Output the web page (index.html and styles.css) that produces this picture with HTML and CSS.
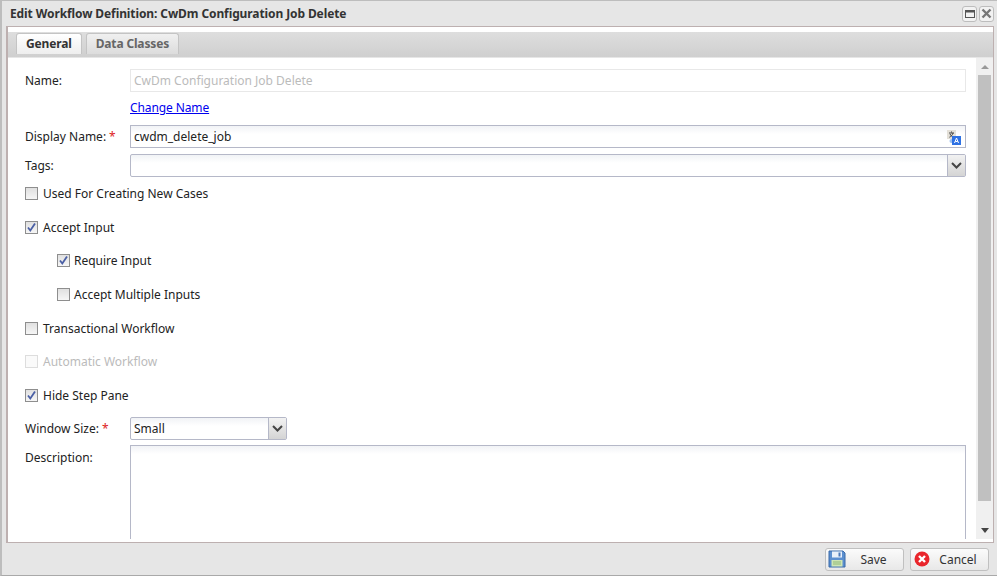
FILE: index.html
```html
<!DOCTYPE html>
<html lang="en">
<head>
<meta charset="utf-8">
<title>Edit Workflow Definition</title>
<link rel="stylesheet" href="styles.css">
</head>
<body>
<div class="window">
  <header class="titlebar">
    <h1 class="title">Edit Workflow Definition: CwDm Configuration Job Delete</h1>
    <div class="winbtns">
      <button class="winbtn" aria-label="Maximize"><svg width="10" height="8" viewBox="0 0 10 8"><rect x="0.500" y="0.500" width="9" height="7" fill="none" stroke="#555"/><rect x="0" y="0" width="10" height="2.500" fill="#555"/></svg></button>
      <button class="winbtn" aria-label="Close"><svg width="11" height="11" viewBox="0 0 11 11"><path d="M1.500 1.500L9.500 9.500M9.500 1.500L1.500 9.500" stroke="#777" stroke-width="2.400" fill="none"/></svg></button>
    </div>
  </header>
  <main class="panel">
    <div class="tabstrip">
      <div class="tab tab-active">General</div>
      <div class="tab">Data Classes</div>
    </div>
    <div class="tabbody">
      <form class="form">
        <div class="row row-name">
          <label class="lbl">Name:</label>
          <div class="field field-disabled">CwDm Configuration Job Delete</div>
        </div>
        <div class="row row-link">
          <span class="lbl"></span>
          <a class="link" href="#">Change Name</a>
        </div>
        <div class="row row-display">
          <label class="lbl">Display Name:<span class="req">*</span></label>
          <div class="field field-text">cwdm_delete_job
            <svg class="translate" width="14" height="15" viewBox="0 0 14 15"><rect x="0" y="0" width="9" height="9" fill="#e4e0d8"/><path d="M4.500 1.500v1M2 3h5M6 3c-.4 2-2 3.600-3.600 4.200M3 4c.7 1.500 1.800 2.600 3.200 3.200" stroke="#444" fill="none"/><circle cx="4.500" cy="11" r="2" fill="#9cc0ef"/><rect x="5" y="6" width="9" height="9" fill="#2f72e4"/><path d="M7.500 13l2-5 2 5M8.300 11.500h2.400" stroke="#fff" fill="none"/></svg>
          </div>
        </div>
        <div class="row row-tags">
          <label class="lbl">Tags:</label>
          <div class="field field-combo">
            <span class="combo-val"></span>
            <span class="combo-btn"><svg width="11" height="7" viewBox="0 0 11 7"><path d="M1 1l4.500 4.500L10 1" stroke="#444" stroke-width="2" fill="none"/></svg></span>
          </div>
        </div>
        <label class="check check-first"><span class="box"></span>Used For Creating New Cases</label>
        <label class="check"><span class="box"><svg width="11" height="11" viewBox="0 0 11 11"><path d="M2 5.500l2.300 3L9 1.500" stroke="#4a5fa5" stroke-width="1.800" fill="none"/></svg></span>Accept Input</label>
        <label class="check check-sub"><span class="box"><svg width="11" height="11" viewBox="0 0 11 11"><path d="M2 5.500l2.300 3L9 1.500" stroke="#4a5fa5" stroke-width="1.800" fill="none"/></svg></span>Require Input</label>
        <label class="check check-sub"><span class="box"></span>Accept Multiple Inputs</label>
        <label class="check"><span class="box"></span>Transactional Workflow</label>
        <label class="check check-disabled"><span class="box"></span>Automatic Workflow</label>
        <label class="check"><span class="box"><svg width="11" height="11" viewBox="0 0 11 11"><path d="M2 5.500l2.300 3L9 1.500" stroke="#4a5fa5" stroke-width="1.800" fill="none"/></svg></span>Hide Step Pane</label>
        <div class="row row-size">
          <label class="lbl">Window Size:<span class="req">*</span></label>
          <div class="field field-combo field-size">
            <span class="combo-val">Small</span>
            <span class="combo-btn"><svg width="11" height="7" viewBox="0 0 11 7"><path d="M1 1l4.500 4.500L10 1" stroke="#444" stroke-width="2" fill="none"/></svg></span>
          </div>
        </div>
        <div class="row row-desc">
          <label class="lbl">Description:</label>
          <div class="field field-area"></div>
        </div>
      </form>
      <div class="scrollbar">
        <span class="arrow arrow-up"></span>
        <span class="thumb"></span>
        <span class="arrow arrow-down"></span>
      </div>
    </div>
  </main>
  <footer class="footer">
    <button class="btn">
      <svg width="18" height="18" viewBox="0 0 18 18"><path d="M1 1h14l2 2v14H1z" fill="#5b8fd0" stroke="#3a6aa8"/><rect x="4" y="1.500" width="10" height="6" fill="#e8f0fa"/><rect x="10.500" y="2.500" width="2" height="4" fill="#4a78b8"/><rect x="3.500" y="10" width="11" height="6.500" fill="#cfe6b4"/><path d="M5 12h8M5 14h8" stroke="#8fb878"/></svg>
      <span class="btn-text">Save</span>
    </button>
    <button class="btn btn-cancel">
      <svg width="16" height="16" viewBox="0 0 16 16"><circle cx="8" cy="8" r="7.500" fill="#e9262c"/><path d="M5 5l6 6M11 5l-6 6" stroke="#fff" stroke-width="2.400" fill="none"/></svg>
      <span class="btn-text">Cancel</span>
    </button>
  </footer>
</div>
</body>
</html>
```
FILE: styles.css
```css
* { box-sizing: border-box; }
html, body { margin: 0; height: 100%; overflow: hidden; }
body {
  font-family: "Noto Sans", sans-serif;
  font-size: 12px;
  color: #222;
  background: #fff;
}
.window {
  height: 576px;
  display: flex;
  flex-direction: column;
  padding: 0 3px 0 4px;
  background: #e6e6e6;
  border-left: 2px solid #bdbdbd;
  border-top: 1px solid #bdbdbd;
  border-bottom: 1px solid #a9a9a9;
}
.titlebar {
  height: 25px;
  flex: none;
  display: flex;
  align-items: center;
  justify-content: space-between;
}
.title {
  margin: 0 0 0 4px;
  font-size: 12px;
  font-weight: bold;
  letter-spacing: -0.1px;
  color: #333;
}
.winbtns { display: flex; gap: 2px; }
.winbtn {
  width: 15px;
  height: 16px;
  padding: 0;
  display: flex;
  align-items: center;
  justify-content: center;
  border: 1px solid #bdbdbd;
  border-radius: 3px;
  background: #f2f2f2;
}
.panel {
  flex: 1;
  min-height: 0;
  display: flex;
  flex-direction: column;
  background: #fff;
  border: 1px solid #bdb0b0;
  border-width: 1px 1px 1px 2px;
  padding-top: 5px;
}
.tabstrip {
  height: 26px;
  flex: none;
  display: flex;
  align-items: flex-end;
  gap: 4px;
  padding: 0 0 3px 8px;
  background: linear-gradient(#dedede, #cfcfcf);
  border-bottom: 1px solid #e6e6e6;
}
.tab {
  height: 21px;
  padding: 0 9px 2px;
  display: flex;
  align-items: center;
  font-weight: bold;
  letter-spacing: -0.15px;
  color: #666;
  border: 1px solid #c4c4c4;
  border-bottom: 0;
  border-radius: 3px 3px 0 0;
  background: linear-gradient(#f0f0f0, #dcdcdc);
}
.tab-active {
  color: #333;
  background: linear-gradient(#fff, #eee);
}
.tabbody {
  flex: 1;
  min-height: 0;
  display: flex;
  padding-bottom: 3px;
}
.form {
  flex: 1;
  min-width: 0;
  overflow: hidden;
  padding: 11px 10px 0 17px;
}
.row { display: flex; align-items: center; }
.lbl { width: 105px; flex: none; }
.req { color: #d22; margin-left: 3px; }
.field {
  flex: 1;
  min-width: 0;
  height: 23px;
  display: flex;
  align-items: center;
  padding: 0 3px;
  border: 1px solid #b5b8c8;
  background: linear-gradient(#f1f3f6, #fff 8px);
}
.field-disabled { color: #bbb; border-color: #e8e8e8; background: #fff; }
.field-text { justify-content: space-between; color: #222; padding-right: 4px; }
.translate { flex: none; margin-top: 1px; }
.row-link { height: 21px; margin-top: 5px; }
.link { color: #00e; text-decoration: underline; letter-spacing: -0.1px; }
.row-display { margin-top: 7px; }
.row-tags { margin-top: 6px; }
.field-combo { padding: 0 0 0 3px; border-radius: 2px; }
.combo-val { flex: 1; }
.combo-btn {
  width: 18px;
  height: 100%;
  flex: none;
  display: flex;
  align-items: center;
  justify-content: center;
  border-left: 1px solid #b5b8c8;
  background: linear-gradient(#f2f2f2, #d4d4d4);
}
.check {
  height: 17px;
  margin-top: 16.670px;
  display: flex;
  align-items: center;
  gap: 5px;
}
.check-first { margin-top: 8px; }
.check-sub { margin-left: 32px; gap: 4px; }
.check-disabled { color: #bbb; }
.check-disabled .box { border-color: #ddd; background: #fafafa; }
.box {
  width: 13px;
  height: 13px;
  flex: none;
  display: flex;
  align-items: center;
  justify-content: center;
  border: 1px solid #8e8e8e;
  background: linear-gradient(#e0e0e0, #f6f6f6);
}
.row-size { margin-top: 13px; }
.field-size { flex: none; width: 157px; }
.row-desc { margin-top: 5px; align-items: flex-start; }
.row-desc .lbl { margin-top: 4px; }
.field-area { height: 140px; }
.scrollbar {
  width: 17px;
  flex: none;
  display: flex;
  flex-direction: column;
  align-items: center;
  background: #f0f0f0;
}
.arrow { width: 0; height: 0; flex: none; border-left: 4px solid transparent; border-right: 4px solid transparent; }
.arrow-up { margin-top: 7px; margin-bottom: 6px; border-bottom: 4px solid #999; }
.arrow-down { margin-top: 27px; border-top: 5px solid #444; }
.thumb { width: 13px; height: 426px; flex: none; background: #c0c0c0; }
.footer {
  height: 32px;
  flex: none;
  display: flex;
  justify-content: flex-end;
  align-items: center;
  gap: 6px;
  padding-right: 5px;
}
.btn {
  width: 79px;
  height: 23px;
  padding: 0 2px;
  display: flex;
  align-items: center;
  font: inherit;
  color: #333;
  border: 1px solid #c0c0c0;
  border-radius: 3px;
  background: linear-gradient(#fbfbfb, #e8e8e8);
}
.btn-cancel { padding-left: 3px; }
.btn-text { flex: 1; text-align: center; }
```
